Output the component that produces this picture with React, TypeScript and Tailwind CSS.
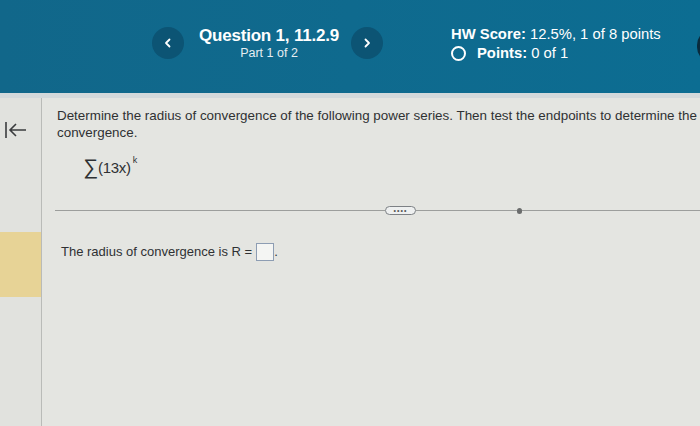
import React from 'react';

// Hình tròn nút điều hướng trên thanh tiêu đề
function NavButton({ dir }: { dir: 'prev' | 'next' }) {
  return (
    <button
      type="button"
      className="flex h-[32px] w-[32px] shrink-0 items-center justify-center rounded-full bg-[#0c5474]"
    >
      <svg width="8" height="10" viewBox="0 0 8 10" fill="none">
        {dir === 'prev' ? (
          <path d="M5.5 1.5 2 5l3.5 3.5" stroke="#fff" strokeWidth="1.8" strokeLinecap="round" strokeLinejoin="round" />
        ) : (
          <path d="M2.5 1.5 6 5 2.5 8.5" stroke="#fff" strokeWidth="1.8" strokeLinecap="round" strokeLinejoin="round" />
        )}
      </svg>
    </button>
  );
}

export default function App() {
  return (
    <div
      className="flex h-[426px] w-[700px] flex-col overflow-hidden bg-[#e4e5e1] text-[#2f3133]"
      style={{ fontFamily: '"Liberation Sans", Arial, sans-serif' }}
    >
      {/* Thanh tiêu đề */}
      <header className="flex h-[93px] shrink-0 items-center bg-gradient-to-r from-[#11678a] via-[#0f6a8e] to-[#0c6d92] pb-[8px] pl-[152px] text-white">
        <NavButton dir="prev" />
        <div className="ml-[12px] flex w-[146px] flex-col items-center">
          <div className="whitespace-nowrap text-[17px] font-bold leading-[21px] tracking-[-0.2px]">Question 1, 11.2.9</div>
          <div className="text-[12.5px] leading-[15px] text-[#e6eef2]">Part 1 of 2</div>
        </div>
        <div className="ml-[9px]">
          <NavButton dir="next" />
        </div>
        <div className="ml-[68px] flex flex-col pt-[2px]">
          <div className="whitespace-nowrap text-[14.8px] leading-[18px]">
            <span className="font-bold">HW Score:</span> 12.5%, 1 of 8 points
          </div>
          <div className="mt-[1px] flex items-center text-[14.8px] leading-[18px]">
            <span className="h-[15px] w-[15px] rounded-full border-2 border-white" />
            <span className="ml-[11px]">
              <span className="font-bold">Points:</span> 0 of 1
            </span>
          </div>
        </div>
        <div className="ml-auto mr-[-29px] mt-[6px] h-[34px] w-[32px] rounded-full bg-[#0a2b3c]" />
      </header>
      <div className="h-[5px] shrink-0 bg-[#d3d9db]" />

      <div className="flex flex-1">
        {/* Thanh bên trái */}
        <aside className="flex w-[42px] shrink-0 flex-col border-r border-[#b9bbb8] bg-[#e1e2de]">
          <div className="mt-[22px] flex justify-center pr-[10px]">
            <svg width="24" height="20" viewBox="0 0 24 20" fill="none">
              <path d="M2 2v16" stroke="#3a3c3e" strokeWidth="1.6" />
              <path d="M6 10h16M12 4 6 10l6 6" stroke="#3a3c3e" strokeWidth="1.6" strokeLinejoin="miter" />
            </svg>
          </div>
          <div className="mt-[92px] h-[65px] bg-[#e7d396]" />
        </aside>

        {/* Nội dung câu hỏi */}
        <main className="flex flex-1 flex-col">
          <div className="pl-[15px] pt-[9px] text-[13.4px] leading-[17px]">
            <div className="whitespace-nowrap">
              Determine the radius of convergence of the following power series. Then test the endpoints to determine the
            </div>
            <div>convergence.</div>
          </div>
          <div className="ml-[41px] mt-[15px] flex items-end leading-none">
            <span className="text-[21px]">∑</span>
            <span className="pb-[2px] text-[15px] tracking-[-0.3px]">(13x)</span>
            <span className="mb-[12px] ml-[2px] text-[9px]">k</span>
          </div>

          <div className="ml-[13px] mt-[29px] flex items-center">
            <div className="h-[1.5px] w-[330px] bg-[#9c9e9c]" />
            <div className="flex h-[9px] w-[31px] items-center justify-center rounded-full border border-[#7d8185] bg-[#eef0f0]">
              <span className="text-[7px] leading-none tracking-[1px] text-[#555]">••••</span>
            </div>
            <div className="h-[1.5px] w-[101px] bg-[#9c9e9c]" />
            <div className="h-[6px] w-[5px] rounded-full bg-[#6a6c6c]" />
            <div className="h-[1.5px] flex-1 bg-[#9c9e9c]" />
          </div>

          <div className="ml-[19px] mt-[28px] flex items-center text-[13px] leading-[18px]">
            <span>The radius of convergence is R =</span>
            <span className="ml-[4px] h-[18px] w-[18px] border border-[#8d9db3] bg-[#f4f5f3]" />
            <span>.</span>
          </div>
        </main>
      </div>
    </div>
  );
}
